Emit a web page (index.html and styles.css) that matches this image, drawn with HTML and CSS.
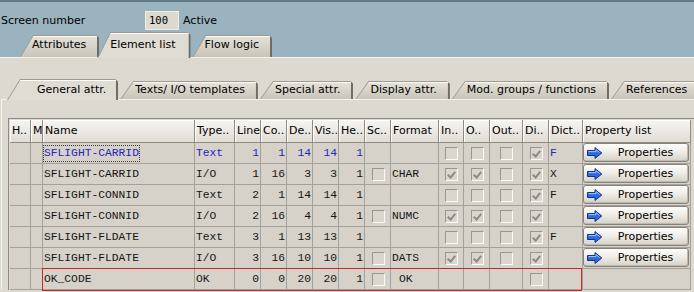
FILE: index.html
```html
<!DOCTYPE html>
<html lang="en">
<head>
    <meta charset="UTF-8">
    <meta name="viewport" content="width=device-width, initial-scale=1.0">
    <title>Screen 100 - Element list</title>
    <link rel="stylesheet" href="styles.css">
</head>
<body>
    <div class="head">
        <div class="screen-row">
            <span class="screen-label">Screen number</span>
            <span class="screen-field">100</span>
            <span class="screen-status">Active</span>
        </div>
        <div class="tabs tabs-main">
            <div class="tab">Attributes</div>
            <div class="tab active">Element list</div>
            <div class="tab">Flow logic</div>
        </div>
    </div>

    <div class="panel">
        <div class="tabs tabs-sub">
            <div class="tab active">General attr.</div>
            <div class="tab">Texts/ I/O templates</div>
            <div class="tab">Special attr.</div>
            <div class="tab">Display attr.</div>
            <div class="tab">Mod. groups / functions</div>
            <div class="tab">References</div>
        </div>

        <div class="subpanel">
            <div class="grid-frame">
                <div class="grid">
                    <!-- en-tetes -->
                    <div class="hc">H..</div>
                    <div class="hc">M</div>
                    <div class="hc">Name</div>
                    <div class="hc">Type..</div>
                    <div class="hc">Line</div>
                    <div class="hc">Co..</div>
                    <div class="hc">De..</div>
                    <div class="hc">Vis..</div>
                    <div class="hc">He..</div>
                    <div class="hc">Sc..</div>
                    <div class="hc">Format</div>
                    <div class="hc">In..</div>
                    <div class="hc">O..</div>
                    <div class="hc">Out..</div>
                    <div class="hc">Di..</div>
                    <div class="hc">Dict..</div>
                    <div class="hc">Property list</div>

                    <!-- ligne 1 -->
                    <div class="c"></div>
                    <div class="c"></div>
                    <div class="c blue nopad"><span class="focus">SFLIGHT-CARRID</span></div>
                    <div class="c blue">Text</div>
                    <div class="c blue num">1</div>
                    <div class="c blue num">1</div>
                    <div class="c blue num">14</div>
                    <div class="c blue num">14</div>
                    <div class="c blue num">1</div>
                    <div class="c"></div>
                    <div class="c"></div>
                    <div class="c ck"><span class="cb"></span></div>
                    <div class="c ck"><span class="cb"></span></div>
                    <div class="c ck"><span class="cb"></span></div>
                    <div class="c ck"><span class="cb on"></span></div>
                    <div class="c blue">F</div>
                    <div class="c prop"><button class="prop-btn"><svg class="arrow" width="16" height="12" viewBox="0 0 16 12"><path d="M0.5 3.5 H8 V0.6 L14.8 6 L8 11.4 V8.5 H0.5 Z" fill="#2f6be0" stroke="#102f8c"/><path d="M1.5 4.6 H9 V2.6 L12.6 5.6" fill="none" stroke="#a9c6ff"/></svg><span>Properties</span></button></div>

                    <!-- ligne 2 -->
                    <div class="c"></div>
                    <div class="c"></div>
                    <div class="c">SFLIGHT-CARRID</div>
                    <div class="c">I/O</div>
                    <div class="c num">1</div>
                    <div class="c num">16</div>
                    <div class="c num">3</div>
                    <div class="c num">3</div>
                    <div class="c num">1</div>
                    <div class="c ck"><span class="cb"></span></div>
                    <div class="c">CHAR</div>
                    <div class="c ck"><span class="cb on"></span></div>
                    <div class="c ck"><span class="cb on"></span></div>
                    <div class="c ck"><span class="cb"></span></div>
                    <div class="c ck"><span class="cb on"></span></div>
                    <div class="c">X</div>
                    <div class="c prop"><button class="prop-btn"><svg class="arrow" width="16" height="12" viewBox="0 0 16 12"><path d="M0.5 3.5 H8 V0.6 L14.8 6 L8 11.4 V8.5 H0.5 Z" fill="#2f6be0" stroke="#102f8c"/><path d="M1.5 4.6 H9 V2.6 L12.6 5.6" fill="none" stroke="#a9c6ff"/></svg><span>Properties</span></button></div>

                    <!-- ligne 3 -->
                    <div class="c"></div>
                    <div class="c"></div>
                    <div class="c">SFLIGHT-CONNID</div>
                    <div class="c">Text</div>
                    <div class="c num">2</div>
                    <div class="c num">1</div>
                    <div class="c num">14</div>
                    <div class="c num">14</div>
                    <div class="c num">1</div>
                    <div class="c"></div>
                    <div class="c"></div>
                    <div class="c ck"><span class="cb"></span></div>
                    <div class="c ck"><span class="cb"></span></div>
                    <div class="c ck"><span class="cb"></span></div>
                    <div class="c ck"><span class="cb on"></span></div>
                    <div class="c">F</div>
                    <div class="c prop"><button class="prop-btn"><svg class="arrow" width="16" height="12" viewBox="0 0 16 12"><path d="M0.5 3.5 H8 V0.6 L14.8 6 L8 11.4 V8.5 H0.5 Z" fill="#2f6be0" stroke="#102f8c"/><path d="M1.5 4.6 H9 V2.6 L12.6 5.6" fill="none" stroke="#a9c6ff"/></svg><span>Properties</span></button></div>

                    <!-- ligne 4 -->
                    <div class="c"></div>
                    <div class="c"></div>
                    <div class="c">SFLIGHT-CONNID</div>
                    <div class="c">I/O</div>
                    <div class="c num">2</div>
                    <div class="c num">16</div>
                    <div class="c num">4</div>
                    <div class="c num">4</div>
                    <div class="c num">1</div>
                    <div class="c ck"><span class="cb"></span></div>
                    <div class="c">NUMC</div>
                    <div class="c ck"><span class="cb on"></span></div>
                    <div class="c ck"><span class="cb on"></span></div>
                    <div class="c ck"><span class="cb"></span></div>
                    <div class="c ck"><span class="cb on"></span></div>
                    <div class="c"></div>
                    <div class="c prop"><button class="prop-btn"><svg class="arrow" width="16" height="12" viewBox="0 0 16 12"><path d="M0.5 3.5 H8 V0.6 L14.8 6 L8 11.4 V8.5 H0.5 Z" fill="#2f6be0" stroke="#102f8c"/><path d="M1.5 4.6 H9 V2.6 L12.6 5.6" fill="none" stroke="#a9c6ff"/></svg><span>Properties</span></button></div>

                    <!-- ligne 5 -->
                    <div class="c"></div>
                    <div class="c"></div>
                    <div class="c">SFLIGHT-FLDATE</div>
                    <div class="c">Text</div>
                    <div class="c num">3</div>
                    <div class="c num">1</div>
                    <div class="c num">13</div>
                    <div class="c num">13</div>
                    <div class="c num">1</div>
                    <div class="c"></div>
                    <div class="c"></div>
                    <div class="c ck"><span class="cb"></span></div>
                    <div class="c ck"><span class="cb"></span></div>
                    <div class="c ck"><span class="cb"></span></div>
                    <div class="c ck"><span class="cb on"></span></div>
                    <div class="c">F</div>
                    <div class="c prop"><button class="prop-btn"><svg class="arrow" width="16" height="12" viewBox="0 0 16 12"><path d="M0.5 3.5 H8 V0.6 L14.8 6 L8 11.4 V8.5 H0.5 Z" fill="#2f6be0" stroke="#102f8c"/><path d="M1.5 4.6 H9 V2.6 L12.6 5.6" fill="none" stroke="#a9c6ff"/></svg><span>Properties</span></button></div>

                    <!-- ligne 6 -->
                    <div class="c"></div>
                    <div class="c"></div>
                    <div class="c">SFLIGHT-FLDATE</div>
                    <div class="c">I/O</div>
                    <div class="c num">3</div>
                    <div class="c num">16</div>
                    <div class="c num">10</div>
                    <div class="c num">10</div>
                    <div class="c num">1</div>
                    <div class="c ck"><span class="cb"></span></div>
                    <div class="c">DATS</div>
                    <div class="c ck"><span class="cb on"></span></div>
                    <div class="c ck"><span class="cb on"></span></div>
                    <div class="c ck"><span class="cb"></span></div>
                    <div class="c ck"><span class="cb on"></span></div>
                    <div class="c"></div>
                    <div class="c prop"><button class="prop-btn"><svg class="arrow" width="16" height="12" viewBox="0 0 16 12"><path d="M0.5 3.5 H8 V0.6 L14.8 6 L8 11.4 V8.5 H0.5 Z" fill="#2f6be0" stroke="#102f8c"/><path d="M1.5 4.6 H9 V2.6 L12.6 5.6" fill="none" stroke="#a9c6ff"/></svg><span>Properties</span></button></div>

                    <!-- ligne 7 : OK_CODE -->
                    <div class="c"></div>
                    <div class="c"></div>
                    <div class="c">OK_CODE</div>
                    <div class="c">OK</div>
                    <div class="c num">0</div>
                    <div class="c num">0</div>
                    <div class="c num">20</div>
                    <div class="c num">20</div>
                    <div class="c num">1</div>
                    <div class="c ck"><span class="cb"></span></div>
                    <div class="c ind">OK</div>
                    <div class="c"></div>
                    <div class="c"></div>
                    <div class="c"></div>
                    <div class="c ck"><span class="cb"></span></div>
                    <div class="c"></div>
                    <div class="c"></div>

                    <div class="err-box"></div>
                </div>
            </div>
        </div>
    </div>
</body>
</html>
```

FILE: styles.css
```css
body {
    margin: 0;
    width: 694px;
    height: 292px;
    overflow: hidden;
    background-color: #dcd9d0;
    font-family: "DejaVu Sans", Verdana, sans-serif;
    font-size: 11px;
    color: #000;
}

/* bandeau du haut */
.head {
    height: 57px;
    box-sizing: border-box;
    padding-top: 9px;
    background-color: #9bb2bf;
    border-top: 2px solid #5e7a89;
}
.screen-row {
    display: flex;
    align-items: center;
    height: 19px;
}
.screen-label {
    width: 144px;
    padding-left: 1px;
}
.screen-field {
    width: 34px;
    height: 19px;
    box-sizing: border-box;
    padding-left: 3px;
    border: 1px solid #eeece6;
    background-color: #dcd9d0;
    font-family: "DejaVu Sans Mono", monospace;
    font-size: 10.5px;
    line-height: 17px;
}
.screen-status {
    margin-left: 4px;
}

/* onglets */
.tabs {
    display: flex;
    align-items: flex-end;
    position: relative;
    z-index: 1;
    white-space: nowrap;
}
.tab {
    position: relative;
    z-index: 0;
    box-sizing: border-box;
    line-height: 14px;
}
.tab::before,
.tab::after {
    content: "";
    position: absolute;
    z-index: -1;
}
.tab::before {
    inset: 0;
    background: linear-gradient(to right, #9c9992 calc(100% - 2px), #6f6c66 calc(100% - 2px));
    clip-path: polygon(0 100%, 13px 0, calc(100% - 3px) 0, 100% 3px, 100% 100%);
}
.tab::after {
    inset: 1px 2px 0 1px;
    background: linear-gradient(#fbfaf7 0, #fbfaf7 1px, #e3e0d7 1px, #c8c4b8);
    clip-path: polygon(0 100%, 12.4px 0, 100% 0, 100% 100%);
}
.tab.active {
    z-index: 2;
    margin-bottom: -1px;
}
.tab.active::after {
    background: linear-gradient(#fdfcfa 0, #fdfcfa 1px, #dfdcd3 1px);
}

.tabs-main {
    height: 25px;
    margin-top: 2px;
    padding-left: 20px;
}
.tabs-main .tab {
    height: 22px;
    padding: 3px 13px 0 12px;
    margin-left: 2px;
}
.tabs-main .tab:first-child {
    margin-left: 0;
}
.tabs-main .tab.active {
    height: 26px;
    padding: 6px 15px 0 13px;
    margin-left: -2px;
}

.panel {
    border-top: 1px solid #f3f1eb;
    padding-top: 21px;
}
.tabs-sub {
    height: 20px;
    padding-left: 7px;
}
.tabs-sub .tab {
    height: 18px;
    padding: 2px 13px 0 15px;
    margin-left: 2px;
}
.tabs-sub .tab.active {
    height: 21px;
    padding: 4px 12px 0 30px;
    margin-left: 0;
}

.subpanel {
    margin-left: 1px;
    padding: 18px 0 0 6px;
    border-top: 1px solid #f3f1eb;
    border-left: 1px solid #f3f1eb;
}

/* grille des elements */
.grid-frame {
    padding: 1px 0 0 1px;
    border-top: 1px solid #8e8b84;
    border-left: 1px solid #8e8b84;
}
.grid {
    position: relative;
    display: grid;
    grid-template-columns: 21px 12px 152px 40px repeat(6, 26px) 48px 25px 26px 33px 26px 34px 108px;
    grid-template-rows: 23px repeat(7, 21px);
    width: max-content;
}
.hc {
    box-sizing: border-box;
    padding-left: 2px;
    border-right: 1px solid #8f8c85;
    border-bottom: 1px solid #8f8c85;
    background: linear-gradient(#f6f5f1, #e0ddd4);
    box-shadow: inset 1px 1px #ffffff;
    line-height: 22px;
    white-space: nowrap;
    overflow: hidden;
}
.c {
    box-sizing: border-box;
    padding-left: 1px;
    border-right: 1px solid #a4a19a;
    border-bottom: 1px solid #a4a19a;
    background-color: #d6d2c9;
    font-family: "Liberation Mono", "Courier New", monospace;
    font-size: 11.3px;
    line-height: 20px;
    color: #151515;
    white-space: nowrap;
    overflow: hidden;
}
.c.num {
    text-align: right;
    padding-right: 1px;
}
.c.blue {
    color: #2424c2;
}
.c.nopad {
    padding-left: 0;
}
.c.ind {
    padding-left: 8px;
}
.c.ck {
    display: flex;
    align-items: center;
    justify-content: center;
}
.focus {
    display: inline-block;
    line-height: 15px;
    border: 1px dotted #3a3a3a;
    vertical-align: middle;
}

.cb {
    position: relative;
    width: 13px;
    height: 13px;
    box-sizing: border-box;
    border: 1px solid;
    border-color: #99968f #fbfaf7 #fbfaf7 #99968f;
    background-color: #d9d6ce;
}
.cb.on::after {
    content: "";
    position: absolute;
    left: 3px;
    top: 1px;
    width: 3px;
    height: 6px;
    border: solid #8c8a85;
    border-width: 0 2px 2px 0;
    transform: rotate(40deg);
}

.c.prop {
    padding: 0 1px 0 0;
}
.prop-btn {
    display: flex;
    align-items: center;
    width: 100%;
    height: 19px;
    margin: 0;
    padding: 0 0 0 3px;
    box-sizing: border-box;
    border: 1px solid #86837a;
    border-radius: 3px;
    background: linear-gradient(#fdfdfb, #efede6 45%, #d5d1c6);
    box-shadow: inset -1px -1px #bdb9ae;
    font-family: "DejaVu Sans", Verdana, sans-serif;
    font-size: 11px;
    color: #000;
}
.prop-btn span {
    flex: 1;
    text-align: center;
}
.arrow {
    display: block;
}

.err-box {
    position: absolute;
    grid-row: 8;
    grid-column: 3 / 17;
    top: -1px;
    left: -1px;
    right: 1px;
    bottom: -1px;
    border: 1px solid #c9262c;
    pointer-events: none;
}
```
